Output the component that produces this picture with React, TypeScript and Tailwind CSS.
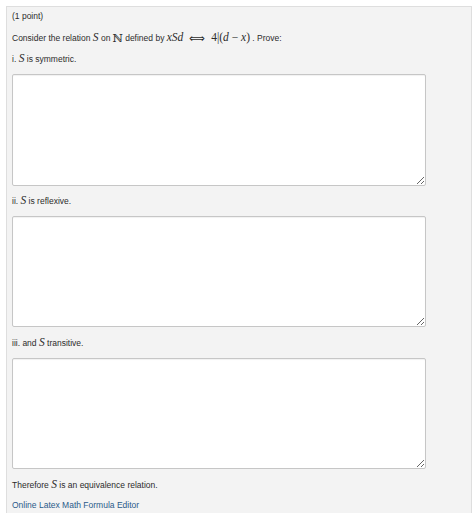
import React from "react";

const M = ({ children, bold = false }: { children: React.ReactNode; bold?: boolean }) => (
  <span
    className={`italic text-[11.5px] leading-none ${bold ? "font-bold" : ""}`}
    style={{ fontFamily: '"Liberation Serif", "DejaVu Serif", serif' }}
  >
    {children}
  </span>
);

const Box = ({ h }: { h: string }) => (
  <textarea
    className={`block w-[414px] ${h} rounded-[2px] border border-[#c6c6c6] bg-white shadow-[inset_0_1px_1px_rgba(0,0,0,0.06)] outline-none resize`}
  />
);

export default function App() {
  return (
    <div className="w-[474px] h-[513px] bg-white pl-[6px] pt-[6px] overflow-hidden">
      <div
        className="w-[466px] h-[507px] border-t border-l border-r border-[#dedede] bg-[#f3f3f3] pl-[5px] pt-[2px] text-[8.5px] text-[#2b2b2b] flex flex-col"
        style={{ fontFamily: '"Liberation Sans", Arial, sans-serif' }}
      >
        <div className="h-[14px] flex items-center">(1 point)</div>
        <div className="mt-[8px] h-[14px] flex items-center whitespace-nowrap">
          <span>Consider the relation&nbsp;</span>
          <M>S</M>
          <span>&nbsp;on&nbsp;</span>
          <span className="text-[11px] leading-none" style={{ fontFamily: '"DejaVu Serif", serif' }}>ℕ</span>
          <span>&nbsp;defined by&nbsp;</span>
          <M>xSd</M>
          <span
            className="mx-[6px] text-[11px] leading-none"
            style={{ fontFamily: '"DejaVu Sans", sans-serif' }}
          >
            ⟺
          </span>
          <span className="text-[11.5px] leading-none" style={{ fontFamily: '"Liberation Serif", serif' }}>
            4|(<i>d</i> − <i>x</i>)
          </span>
          <span>&nbsp;. Prove:</span>
        </div>
        <div className="mt-[7px] h-[14px] flex items-center whitespace-nowrap">
          <span>i.&nbsp;</span>
          <M>S</M>
          <span>&nbsp;is symmetric.</span>
        </div>
        <div className="mt-[8px]">
          <Box h="h-[112px]" />
        </div>
        <div className="mt-[8px] h-[14px] flex items-center whitespace-nowrap">
          <span>ii.&nbsp;</span>
          <M>S</M>
          <span>&nbsp;is reflexive.</span>
        </div>
        <div className="mt-[8px]">
          <Box h="h-[111px]" />
        </div>
        <div className="mt-[9px] h-[14px] flex items-center whitespace-nowrap">
          <span>iii. and&nbsp;</span>
          <M>S</M>
          <span>&nbsp;transitive.</span>
        </div>
        <div className="mt-[8px]">
          <Box h="h-[111px]" />
        </div>
        <div className="mt-[9px] h-[14px] flex items-center whitespace-nowrap">
          <span>Therefore&nbsp;</span>
          <M>S</M>
          <span>&nbsp;is an equivalence relation.</span>
        </div>
        <div className="mt-[6px] h-[14px] flex items-center">
          <a href="#" className="text-[#2a5a8a] no-underline">
            Online Latex Math Formula Editor
          </a>
        </div>
      </div>
    </div>
  );
}
